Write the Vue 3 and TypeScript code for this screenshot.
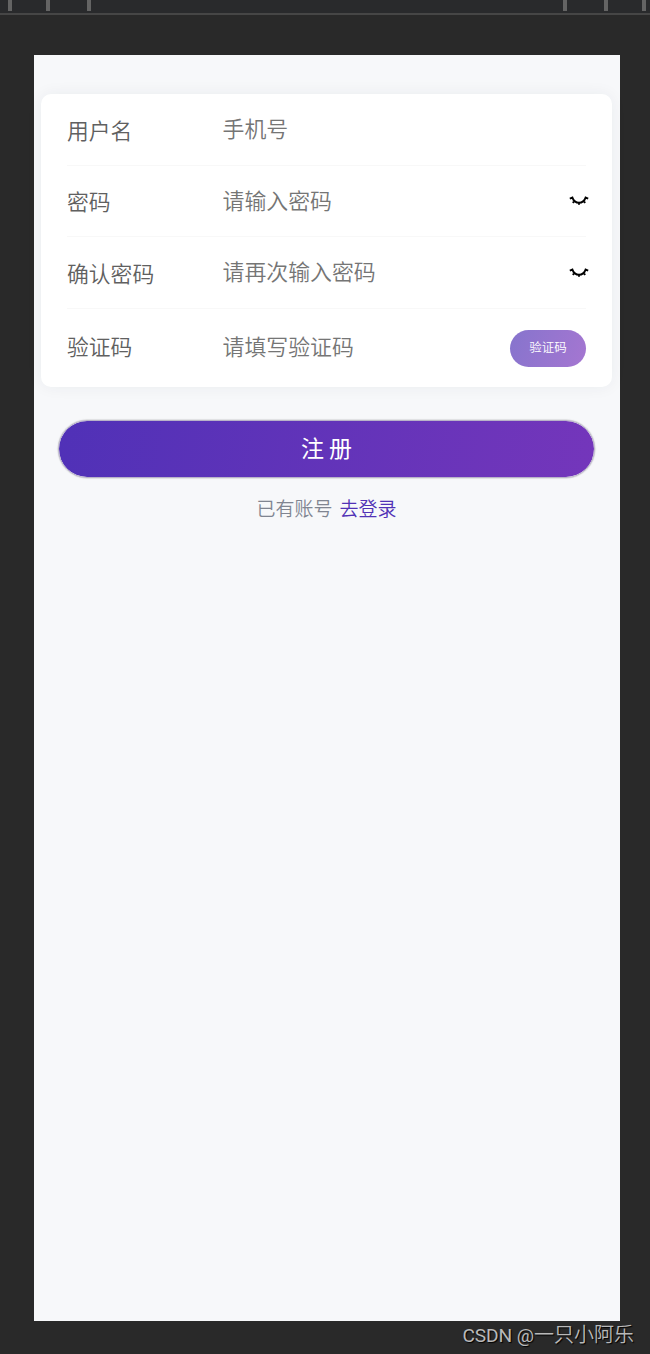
<script setup lang="ts">
import { ref } from 'vue'

interface Field {
  key: string
  label: string
  placeholder: string
  kind: 'text' | 'password' | 'code'
}

const fields: Field[] = [
  { key: 'user', label: '用户名', placeholder: '手机号', kind: 'text' },
  { key: 'pass', label: '密码', placeholder: '请输入密码', kind: 'password' },
  { key: 'confirm', label: '确认密码', placeholder: '请再次输入密码', kind: 'password' },
  { key: 'code', label: '验证码', placeholder: '请填写验证码', kind: 'code' },
]

const values = ref<Record<string, string>>({ user: '', pass: '', confirm: '', code: '' })
</script>

<template>
  <div class="device">
    <div class="ruler">
      <div class="ticks left"><i /><i /><i /></div>
      <div class="ticks right"><i /><i /><i /></div>
    </div>
    <main class="screen">
      <form class="card" @submit.prevent>
        <div v-for="f in fields" :key="f.key" class="row" :class="f.kind">
          <label class="label" :for="f.key">{{ f.label }}</label>
          <input
            :id="f.key"
            v-model="values[f.key]"
            class="input"
            :type="f.kind === 'password' ? 'password' : 'text'"
            :placeholder="f.placeholder"
            autocomplete="off"
          />
          <svg v-if="f.kind === 'password'" class="eye" viewBox="0 0 20 12">
            <path
              d="M0.8 3.6 L3.4 2.6 Q5.2 7.7 10 7.7 T16.6 2.6 L19.2 3.6 M5.4 5.8 L3.8 7.8 M10 7.6 V9.8 M14.6 5.8 L16.2 7.8"
            />
          </svg>
          <button v-if="f.kind === 'code'" class="code-btn" type="button">验证码</button>
        </div>
      </form>
      <button class="submit" type="button">注 册</button>
      <p class="hint"><span>已有账号</span><a>去登录</a></p>
    </main>
    <footer class="mark"><span class="site">CSDN @</span>一只小阿乐</footer>
  </div>
</template>

<style>
body {
  background: #292929;
}
</style>

<style scoped>
.device {
  box-sizing: border-box;
  width: 650px;
  height: 1354px;
  overflow: hidden;
  background: #292929;
  font-family: 'Noto Sans CJK SC', sans-serif;
  font-weight: 350;
}
.ruler {
  box-sizing: border-box;
  height: 15px;
  display: flex;
  justify-content: space-between;
  padding: 0 4px 0 8px;
  background: #292a2c;
  border-bottom: 2px solid #464646;
}
.ticks {
  display: flex;
}
.ticks i {
  width: 4px;
  height: 11px;
  background: #646464;
}
.left i + i {
  margin-left: 34px;
}
.left i:last-child,
.right i:nth-child(2) {
  margin-left: 37px;
}
.right i:last-child {
  margin-left: 34px;
}
.screen {
  box-sizing: border-box;
  width: 586px;
  height: 1266px;
  margin: 40px 0 0 34px;
  padding: 39px 8px 0 7px;
  background: #f7f8fa;
}
.card {
  box-sizing: border-box;
  height: 293px;
  padding: 0 26px;
  border-radius: 10px;
  background: #fff;
  box-shadow: 0 0 16px rgba(30, 50, 60, 0.06);
}
.row {
  box-sizing: border-box;
  height: 71.6px;
  display: flex;
  align-items: center;
  border-bottom: 1px solid #f8f8f8;
}
.row.code {
  height: 78px;
  border-bottom: 0;
}
.label {
  width: 155.5px;
  flex: none;
  padding-top: 1px;
  font-size: 21.8px;
  line-height: 32px;
  color: #606060;
}
.row.code .label {
  padding: 0 0 4px;
}
.input {
  flex: 1;
  min-width: 0;
  height: 36px;
  padding: 0 0 3px;
  box-sizing: border-box;
  border: 0;
  outline: 0;
  background: transparent;
  font: inherit;
  font-size: 21.9px;
  color: #606060;
}
.row.code .input {
  padding-bottom: 4px;
}
.input::placeholder {
  color: #757575;
}
.eye {
  flex: none;
  width: 20px;
  height: 12px;
  margin: 1px -3px 0 0;
  fill: none;
  stroke: #000;
  stroke-width: 1.9;
}
.code-btn {
  flex: none;
  width: 76px;
  height: 37px;
  margin-top: 1px;
  padding: 0 0 3px;
  border: 0;
  border-radius: 19px;
  background: linear-gradient(110deg, #8674cd, #a576d1);
  color: #fff;
  font: inherit;
  font-size: 12.5px;
}
.submit {
  display: block;
  box-sizing: border-box;
  width: 537px;
  height: 58px;
  margin: 32.5px 0 0 17px;
  padding: 0 0 3px;
  border: 1px solid #b9b3c8;
  border-radius: 30px;
  background: linear-gradient(100deg, #5031b7, #7436bb) padding-box;
  box-shadow: 0 0 1px 0.5px rgba(120, 120, 120, 0.35);
  color: #fff;
  font: inherit;
  font-size: 23px;
  font-weight: 400;
}
.hint {
  display: flex;
  justify-content: center;
  gap: 7px;
  margin: 16.5px 0 0;
  font-size: 19px;
  line-height: 28px;
  color: #808591;
}
.hint a {
  color: #5132b6;
}
.mark {
  padding-right: 16px;
  text-align: right;
  font-size: 20px;
  line-height: 26px;
  color: #b9b9b9;
  text-shadow: 1px 1px 1px #000;
}
.site {
  font-family: Roboto, 'Liberation Sans', sans-serif;
  font-size: 19.2px;
  font-weight: 400;
  letter-spacing: -0.1px;
}
</style>
